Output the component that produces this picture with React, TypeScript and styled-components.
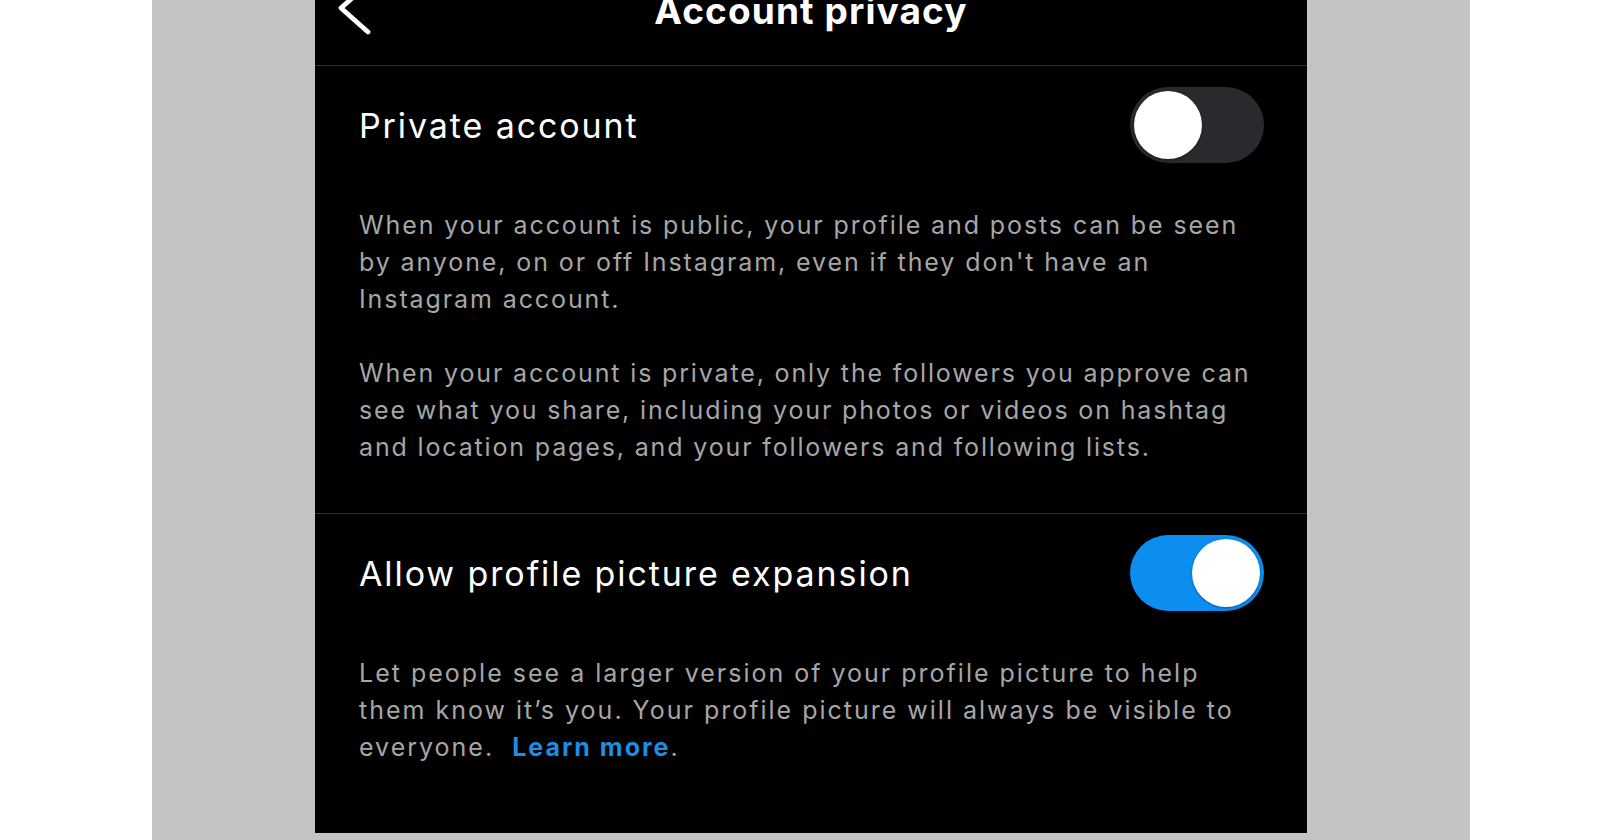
import styled, { createGlobalStyle } from 'styled-components'

const GlobalStyle = createGlobalStyle`
  html, body {
    margin: 0;
    padding: 0;
    background: #ffffff;
  }
  body {
    font-family: Inter, "Noto Sans", "Liberation Sans", sans-serif;
    -webkit-font-smoothing: antialiased;
  }
`

const Page = styled.div`
  display: flex;
  height: 840px;
  padding-left: 152px;
  overflow: hidden;
`

const Backdrop = styled.div`
  display: flex;
  justify-content: center;
  width: 1318px;
  height: 840px;
  background: #c4c4c4;
`

const Phone = styled.div`
  display: flex;
  flex-direction: column;
  width: 992px;
  height: 833px;
  background: #000000;
  overflow: hidden;
`

const Header = styled.header`
  display: grid;
  grid-template-columns: 1fr auto 1fr;
  align-items: start;
  height: 65px;
  border-bottom: 1px solid #2e2e2e;
  overflow: hidden;
`

const BackButton = styled.svg`
  margin-top: -20px;
  margin-left: 19px;
`

const Title = styled.h1`
  margin: -9px 0 0;
  font-size: 37px;
  line-height: 40px;
  font-weight: 700;
  color: #ffffff;
  letter-spacing: 1.1px;
`

const Section = styled.section<{ $divider?: boolean }>`
  display: flex;
  flex-direction: column;
  padding: 21px 43px 47px 44px;
  border-bottom: ${p => (p.$divider ? '1px solid #2e2e2e' : 'none')};
`

const Row = styled.div`
  display: flex;
  align-items: center;
  justify-content: space-between;
`

const Label = styled.span`
  font-size: 34px;
  color: #ffffff;
  letter-spacing: 1.9px;
`

const Toggle = styled.button<{ $on?: boolean }>`
  display: flex;
  justify-content: ${p => (p.$on ? 'flex-end' : 'flex-start')};
  align-items: center;
  width: 134px;
  height: 76px;
  padding: 4px;
  border: none;
  border-radius: 38px;
  background: ${p => (p.$on ? '#0b8ef0' : '#2a2a2e')};
  cursor: pointer;
`

const Knob = styled.span`
  width: 68px;
  height: 68px;
  border-radius: 50%;
  background: #ffffff;
  box-shadow: 0 1px 3px rgba(0, 0, 0, 0.35);
`

const Description = styled.div`
  display: flex;
  flex-direction: column;
  gap: 37px;
  margin-top: 44px;
`

const Paragraph = styled.p<{ $tracking: number }>`
  margin: 0;
  font-size: 25px;
  line-height: 37px;
  color: #a6a6a6;
  letter-spacing: ${p => p.$tracking}px;
`

const Link = styled.a`
  color: #1d8de6;
  font-weight: 700;
  text-decoration: none;
`

function Switch({ on }: { on?: boolean }) {
  return (
    <Toggle $on={on} role="switch" aria-checked={!!on}>
      <Knob />
    </Toggle>
  )
}

export default function App() {
  return (
    <>
      <GlobalStyle />
      <Page>
        <Backdrop>
          <Phone>
            <Header>
              <BackButton width="40" height="60" viewBox="0 0 40 60">
                <path
                  d="M34 4 L7 28 L34 52"
                  fill="none"
                  stroke="#ffffff"
                  strokeWidth="4.8"
                  strokeLinecap="round"
                  strokeLinejoin="round"
                />
              </BackButton>
              <Title>Account privacy</Title>
              <span />
            </Header>

            <Section $divider>
              <Row>
                <Label>Private account</Label>
                <Switch />
              </Row>
              <Description>
                <Paragraph $tracking={1.9}>
                  When your account is public, your profile and posts can be seen by anyone, on or off
                  Instagram, even if they don't have an Instagram account.
                </Paragraph>
                <Paragraph $tracking={1.85}>
                  When your account is private, only the followers you approve can see what you share,
                  including your photos or videos on hashtag and location pages, and your followers and
                  following lists.
                </Paragraph>
              </Description>
            </Section>

            <Section>
              <Row>
                <Label>Allow profile picture expansion</Label>
                <Switch on />
              </Row>
              <Description>
                <Paragraph $tracking={2}>
                  Let people see a larger version of your profile picture to help them know it’s you. Your
                  profile picture will always be visible to everyone.&nbsp; <Link href="#">Learn more</Link>.
                </Paragraph>
              </Description>
            </Section>
          </Phone>
        </Backdrop>
      </Page>
    </>
  )
}
